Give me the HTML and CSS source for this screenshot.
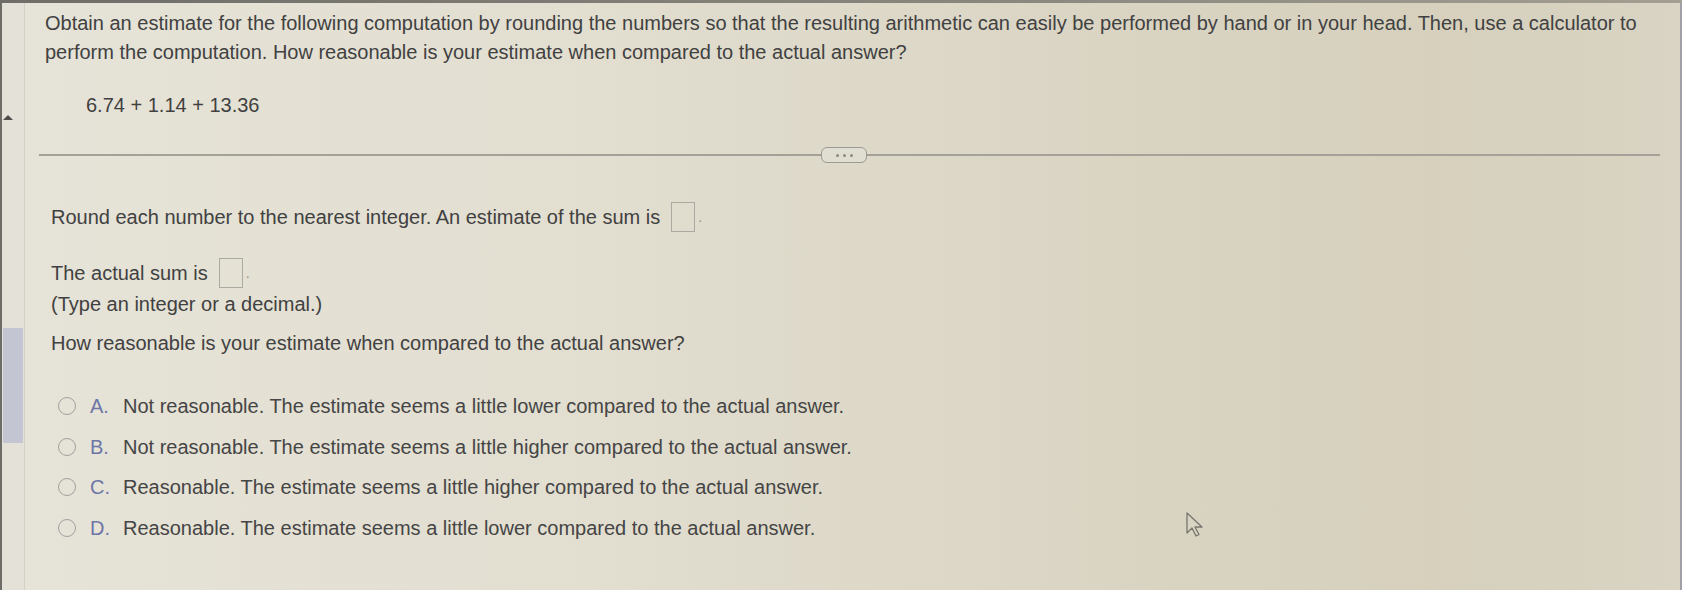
FILE: index.html
```html
<!DOCTYPE html>
<html>
<head>
<meta charset="utf-8">
<link rel="stylesheet" href="styles.css">
</head>
<body>
<div class="screen">
  <div class="topstrip"></div>
  <div class="frame">
    <div class="leftbar">
      <div class="tri"></div>
      <div class="thumb"></div>
    </div>
    <div class="main">
      <div class="question">
        <p class="prompt">Obtain an estimate for the following computation by rounding the numbers so that the resulting arithmetic can easily be performed by hand or in your head. Then, use a calculator to perform the computation. How reasonable is your estimate when compared to the actual answer?</p>
        <p class="expr">6.74 + 1.14 + 13.36</p>
      </div>
      <div class="divider">
        <div class="rule left"></div>
        <div class="more"><span></span><span></span><span></span></div>
        <div class="rule right"></div>
      </div>
      <div class="answers">
        <p class="line first">Round each number to the nearest integer. An estimate of the sum is <span class="box"></span><span class="dot">.</span></p>
        <p class="line second">The actual sum is <span class="box"></span><span class="dot">.</span></p>
        <p class="line hint">(Type an integer or a decimal.)</p>
        <p class="line ask">How reasonable is your estimate when compared to the actual answer?</p>
        <ul class="options">
          <li><span class="radio"></span><span class="letter">A.</span><span class="opt">Not reasonable. The estimate seems a little lower compared to the actual answer.</span></li>
          <li><span class="radio"></span><span class="letter">B.</span><span class="opt">Not reasonable. The estimate seems a little higher compared to the actual answer.</span></li>
          <li><span class="radio"></span><span class="letter">C.</span><span class="opt">Reasonable. The estimate seems a little higher compared to the actual answer.</span></li>
          <li><span class="radio"></span><span class="letter">D.</span><span class="opt">Reasonable. The estimate seems a little lower compared to the actual answer.</span></li>
        </ul>
      </div>
    </div>
    <div class="rightedge"></div>
  </div>
  <svg class="cursor" width="20" height="28" viewBox="0 0 20 28"><path d="M2 2 L2 22 L7 17 L11 25 L14 23.5 L10 16 L17 16 Z" fill="none" stroke="#77766e" stroke-width="1.3" stroke-linejoin="round"/></svg>
</div>
</body>
</html>
```
FILE: styles.css
```css
html, body {
  margin: 0;
  padding: 0;
}
body {
  width: 1682px;
  height: 590px;
  overflow: hidden;
  font-family: "Liberation Sans", Arial, sans-serif;
  color: #414141;
}
.screen {
  position: relative;
  width: 1682px;
  height: 590px;
  background: linear-gradient(90deg, #e6e3d8 0%, #e2ded0 35%, #dbd6c5 60%, #d6d0bd 85%, #d9d4c3 100%);
  display: flex;
  flex-direction: column;
}
.topstrip {
  height: 3px;
  background: linear-gradient(90deg, #6f6d68, #8a877e 60%, #a29e92);
}
.frame {
  flex: 1;
  display: flex;
}
.leftbar {
  width: 22px;
  border-left: 2px solid #6e6c67;
  border-right: 1px solid #d3d1c7;
  background: #e4e2d8;
  display: flex;
  flex-direction: column;
}
.tri {
  margin: 112px 0 0 1px;
  width: 0;
  height: 0;
  border-left: 5px solid transparent;
  border-right: 5px solid transparent;
  border-bottom: 5px solid #4f4e4a;
}
.thumb {
  margin: 208px 0 0 1px;
  width: 20px;
  height: 115px;
  background: #c3c5d2;
}
.main {
  flex: 1;
  display: flex;
  flex-direction: column;
}
.rightedge {
  width: 2px;
  background: #9fa0a6;
}
p {
  margin: 0;
}
.question {
  padding: 6px 0 0 20px;
}
.prompt {
  font-size: 20px;
  line-height: 29px;
  width: 1610px;
}
.expr {
  margin: 24px 0 0 41px;
  font-size: 20px;
  line-height: 28px;
}
.divider {
  display: flex;
  align-items: center;
  margin-top: 27px;
  height: 18px;
  padding-left: 14px;
}
.rule {
  height: 2px;
  background: #a3a198;
}
.rule.left {
  width: 782px;
}
.rule.right {
  width: 793px;
}
.more {
  width: 44px;
  height: 14px;
  border: 1.5px solid #9b9a94;
  border-radius: 6px;
  background: #e0ddd1;
  display: flex;
  align-items: center;
  justify-content: center;
  gap: 4px;
}
.more span {
  width: 3px;
  height: 3px;
  border-radius: 50%;
  background: #8a8983;
}
.answers {
  padding-left: 26px;
  font-size: 20px;
}
.line {
  line-height: 28px;
  display: flex;
  align-items: center;
}
.first {
  margin-top: 38px;
}
.second {
  margin-top: 26px;
}
.hint {
  margin-top: 2px;
}
.ask {
  margin-top: 11px;
}
.box {
  display: inline-block;
  width: 22px;
  height: 28px;
  border: 1.5px solid #aaa9a2;
  margin-left: 11px;
}
.dot {
  color: #8d8c86;
  font-size: 14px;
  margin-left: 3px;
}
.options {
  list-style: none;
  margin: 35px 0 0 0;
  padding: 0 0 0 7px;
  display: flex;
  flex-direction: column;
  gap: 12.5px;
}
.options li {
  display: flex;
  align-items: center;
  height: 28px;
  line-height: 28px;
}
.radio {
  width: 16px;
  height: 16px;
  border: 1.7px solid #a0a0a0;
  border-radius: 50%;
  margin-right: 14px;
}
.letter {
  color: #6d76a6;
  width: 33px;
}
.opt {
  color: #454545;
}
.cursor {
  position: absolute;
  left: 1185px;
  top: 511px;
}
```
